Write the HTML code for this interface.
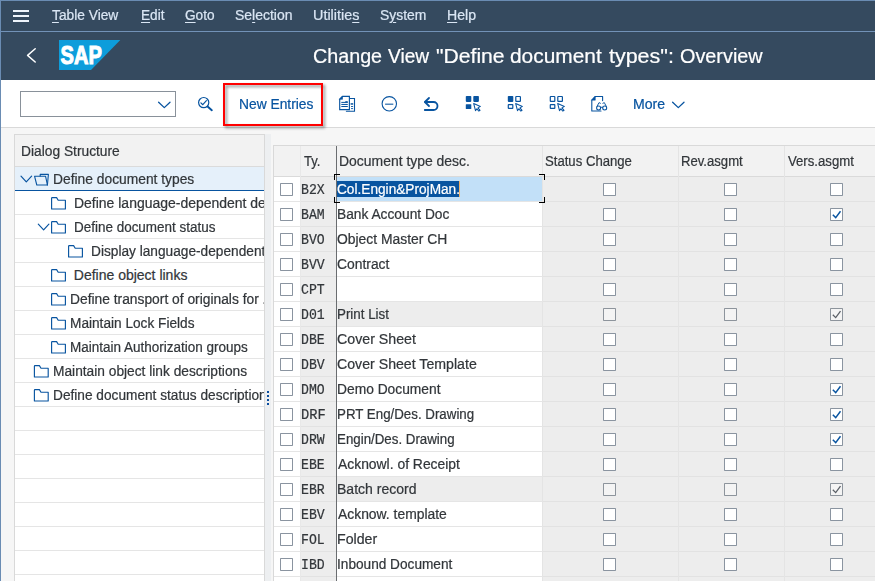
<!DOCTYPE html>
<html><head><meta charset="utf-8"><title>Change View "Define document types": Overview</title>
<style>
html,body{margin:0;padding:0;}
html{width:875px;height:581px;overflow:hidden;}
body{width:875px;height:581px;overflow:hidden;position:relative;background:#f6f6f6;font-family:"Liberation Sans",sans-serif;}
div,span,svg{position:absolute;box-sizing:border-box;}

.t{font-family:"Liberation Sans",sans-serif;font-size:14px;line-height:16px;color:#32363a;}
.m{font-family:"Liberation Mono",monospace;font-size:14px;line-height:16px;color:#32363a;}
.mn{color:#dae6f4;}
.bl{color:#0854a0;}
.ti{font-size:20px;line-height:24px;color:#fff;}
.wh{color:#fff;}

.t,.m{white-space:pre;transform-origin:0 0;-webkit-text-stroke:0.22px currentColor;}
u{text-decoration:underline;text-decoration-thickness:1px;text-underline-offset:1.5px;}
.cb{width:13px;height:13px;border:1px solid #8a94a0;border-radius:0.75px;background:#fff;}
.cb.d{background:#f4f4f4;border-color:#8d949c;}
.hl{background:#e5e5e5;height:1px;}
.vl{background:#e6e6e6;width:1px;}
</style></head><body>
<div style="left:0;top:0;width:875px;height:581px;overflow:hidden">
<div style="left:0;top:0;width:875px;height:80px;background:#354a5f"></div>
<div style="left:0;top:31px;width:875px;height:1px;background:#7292b7"></div>
<div style="left:0;top:0;width:875px;height:1px;background:#6a8cb3"></div>
<div style="left:13px;top:10px;width:16px;height:2px;background:#eef4fb"></div>
<div style="left:13px;top:15px;width:16px;height:2px;background:#eef4fb"></div>
<div style="left:13px;top:20px;width:16px;height:2px;background:#eef4fb"></div>
<div style="left:0;top:80px;width:875px;height:47px;background:#fff"></div>
<div style="left:0;top:127px;width:875px;height:1px;background:#d9d9d9"></div>
<div style="left:20px;top:91px;width:156px;height:26px;border:1px solid #89919a;background:#fff"></div>
<div style="left:14px;top:134px;width:251px;height:460px;border:1px solid #d9d9d9;background:#fff"></div>
<div style="left:15px;top:135px;width:249px;height:31px;background:#f2f2f2"></div>
<div class="hl" style="left:15px;top:166px;width:249px;background:#dbdbdb"></div>
<div style="left:15px;top:167px;width:249px;height:23px;background:#e5f0fa"></div>
<div class="hl" style="left:15px;top:190px;width:249px;background:#0854a0"></div>
<div class="hl" style="left:15px;top:214px;width:249px;background:#e5e5e5"></div>
<div class="hl" style="left:15px;top:238px;width:249px;background:#e5e5e5"></div>
<div class="hl" style="left:15px;top:262px;width:249px;background:#e5e5e5"></div>
<div class="hl" style="left:15px;top:286px;width:249px;background:#e5e5e5"></div>
<div class="hl" style="left:15px;top:310px;width:249px;background:#e5e5e5"></div>
<div class="hl" style="left:15px;top:334px;width:249px;background:#e5e5e5"></div>
<div class="hl" style="left:15px;top:358px;width:249px;background:#e5e5e5"></div>
<div class="hl" style="left:15px;top:382px;width:249px;background:#e5e5e5"></div>
<div class="hl" style="left:15px;top:406px;width:249px;background:#e5e5e5"></div>
<div class="hl" style="left:15px;top:430px;width:249px;background:#e5e5e5"></div>
<div class="hl" style="left:15px;top:454px;width:249px;background:#e5e5e5"></div>
<div class="hl" style="left:15px;top:478px;width:249px;background:#e5e5e5"></div>
<div class="hl" style="left:15px;top:502px;width:249px;background:#e5e5e5"></div>
<div class="hl" style="left:15px;top:526px;width:249px;background:#e5e5e5"></div>
<div class="hl" style="left:15px;top:550px;width:249px;background:#e5e5e5"></div>
<div class="hl" style="left:15px;top:574px;width:249px;background:#e5e5e5"></div>
<div style="left:265px;top:134px;width:6px;height:460px;background:#edeff1"></div>
<div style="left:267px;top:391px;width:2px;height:2px;background:#0a4d9e"></div>
<div style="left:267px;top:395px;width:2px;height:2px;background:#0a4d9e"></div>
<div style="left:267px;top:399px;width:2px;height:2px;background:#0a4d9e"></div>
<div style="left:267px;top:403px;width:2px;height:2px;background:#0a4d9e"></div>
<div style="left:273px;top:145px;width:620px;height:460px;border:1px solid #d9d9d9;background:#fff"></div>
<div style="left:274px;top:146px;width:601px;height:30px;background:#f2f2f2"></div>
<div style="left:300px;top:177px;width:36px;height:420px;background:#ededed"></div>
<div style="left:543px;top:177px;width:340px;height:420px;background:#ededed"></div>
<div style="left:337px;top:302px;width:206px;height:24px;background:#ededed"></div>
<div style="left:337px;top:477px;width:206px;height:24px;background:#ededed"></div>
<div style="left:337px;top:177px;width:205px;height:24px;background:#c2e0f8"></div>
<div style="left:337px;top:181px;width:122px;height:16px;background:#0854a0"></div>
<div style="left:459px;top:181px;width:1px;height:16px;background:#efb26c"></div>
<div class="hl" style="left:274px;top:176px;width:601px;background:#dadada"></div>
<div class="hl" style="left:274px;top:201px;width:26px;background:#e5e5e5"></div>
<div class="hl" style="left:300px;top:201px;width:36px;background:#e2e2e2"></div>
<div class="hl" style="left:337px;top:201px;width:205px;background:#e5e5e5"></div>
<div class="hl" style="left:542px;top:201px;width:333px;background:#e2e2e2"></div>
<div class="hl" style="left:274px;top:226px;width:26px;background:#e5e5e5"></div>
<div class="hl" style="left:300px;top:226px;width:36px;background:#e2e2e2"></div>
<div class="hl" style="left:337px;top:226px;width:205px;background:#e5e5e5"></div>
<div class="hl" style="left:542px;top:226px;width:333px;background:#e2e2e2"></div>
<div class="hl" style="left:274px;top:251px;width:26px;background:#e5e5e5"></div>
<div class="hl" style="left:300px;top:251px;width:36px;background:#e2e2e2"></div>
<div class="hl" style="left:337px;top:251px;width:205px;background:#e5e5e5"></div>
<div class="hl" style="left:542px;top:251px;width:333px;background:#e2e2e2"></div>
<div class="hl" style="left:274px;top:276px;width:26px;background:#e5e5e5"></div>
<div class="hl" style="left:300px;top:276px;width:36px;background:#e2e2e2"></div>
<div class="hl" style="left:337px;top:276px;width:205px;background:#e5e5e5"></div>
<div class="hl" style="left:542px;top:276px;width:333px;background:#e2e2e2"></div>
<div class="hl" style="left:274px;top:301px;width:26px;background:#e5e5e5"></div>
<div class="hl" style="left:300px;top:301px;width:36px;background:#e2e2e2"></div>
<div class="hl" style="left:337px;top:301px;width:205px;background:#e5e5e5"></div>
<div class="hl" style="left:542px;top:301px;width:333px;background:#e2e2e2"></div>
<div class="hl" style="left:274px;top:326px;width:26px;background:#e5e5e5"></div>
<div class="hl" style="left:300px;top:326px;width:36px;background:#e2e2e2"></div>
<div class="hl" style="left:337px;top:326px;width:205px;background:#e5e5e5"></div>
<div class="hl" style="left:542px;top:326px;width:333px;background:#e2e2e2"></div>
<div class="hl" style="left:274px;top:351px;width:26px;background:#e5e5e5"></div>
<div class="hl" style="left:300px;top:351px;width:36px;background:#e2e2e2"></div>
<div class="hl" style="left:337px;top:351px;width:205px;background:#e5e5e5"></div>
<div class="hl" style="left:542px;top:351px;width:333px;background:#e2e2e2"></div>
<div class="hl" style="left:274px;top:376px;width:26px;background:#e5e5e5"></div>
<div class="hl" style="left:300px;top:376px;width:36px;background:#e2e2e2"></div>
<div class="hl" style="left:337px;top:376px;width:205px;background:#e5e5e5"></div>
<div class="hl" style="left:542px;top:376px;width:333px;background:#e2e2e2"></div>
<div class="hl" style="left:274px;top:401px;width:26px;background:#e5e5e5"></div>
<div class="hl" style="left:300px;top:401px;width:36px;background:#e2e2e2"></div>
<div class="hl" style="left:337px;top:401px;width:205px;background:#e5e5e5"></div>
<div class="hl" style="left:542px;top:401px;width:333px;background:#e2e2e2"></div>
<div class="hl" style="left:274px;top:426px;width:26px;background:#e5e5e5"></div>
<div class="hl" style="left:300px;top:426px;width:36px;background:#e2e2e2"></div>
<div class="hl" style="left:337px;top:426px;width:205px;background:#e5e5e5"></div>
<div class="hl" style="left:542px;top:426px;width:333px;background:#e2e2e2"></div>
<div class="hl" style="left:274px;top:451px;width:26px;background:#e5e5e5"></div>
<div class="hl" style="left:300px;top:451px;width:36px;background:#e2e2e2"></div>
<div class="hl" style="left:337px;top:451px;width:205px;background:#e5e5e5"></div>
<div class="hl" style="left:542px;top:451px;width:333px;background:#e2e2e2"></div>
<div class="hl" style="left:274px;top:476px;width:26px;background:#e5e5e5"></div>
<div class="hl" style="left:300px;top:476px;width:36px;background:#e2e2e2"></div>
<div class="hl" style="left:337px;top:476px;width:205px;background:#e5e5e5"></div>
<div class="hl" style="left:542px;top:476px;width:333px;background:#e2e2e2"></div>
<div class="hl" style="left:274px;top:501px;width:26px;background:#e5e5e5"></div>
<div class="hl" style="left:300px;top:501px;width:36px;background:#e2e2e2"></div>
<div class="hl" style="left:337px;top:501px;width:205px;background:#e5e5e5"></div>
<div class="hl" style="left:542px;top:501px;width:333px;background:#e2e2e2"></div>
<div class="hl" style="left:274px;top:526px;width:26px;background:#e5e5e5"></div>
<div class="hl" style="left:300px;top:526px;width:36px;background:#e2e2e2"></div>
<div class="hl" style="left:337px;top:526px;width:205px;background:#e5e5e5"></div>
<div class="hl" style="left:542px;top:526px;width:333px;background:#e2e2e2"></div>
<div class="hl" style="left:274px;top:551px;width:26px;background:#e5e5e5"></div>
<div class="hl" style="left:300px;top:551px;width:36px;background:#e2e2e2"></div>
<div class="hl" style="left:337px;top:551px;width:205px;background:#e5e5e5"></div>
<div class="hl" style="left:542px;top:551px;width:333px;background:#e2e2e2"></div>
<div class="hl" style="left:274px;top:576px;width:26px;background:#e5e5e5"></div>
<div class="hl" style="left:300px;top:576px;width:36px;background:#e2e2e2"></div>
<div class="hl" style="left:337px;top:576px;width:205px;background:#e5e5e5"></div>
<div class="hl" style="left:542px;top:576px;width:333px;background:#e2e2e2"></div>
<div class="vl" style="left:300px;top:146px;height:440px;background:#e8e8e8"></div>
<div class="vl" style="left:336px;top:146px;height:440px;background:#6a6d70"></div>
<div class="vl" style="left:542px;top:146px;height:440px;background:#e4e4e4"></div>
<div class="vl" style="left:678px;top:146px;height:440px;background:#e4e4e4"></div>
<div class="vl" style="left:784px;top:146px;height:440px;background:#e4e4e4"></div>
<div style="left:334px;top:174px;width:6px;height:1px;background:#000"></div>
<div style="left:334px;top:174px;width:1px;height:6px;background:#000"></div>
<div style="left:334px;top:202px;width:6px;height:1px;background:#000"></div>
<div style="left:334px;top:197px;width:1px;height:6px;background:#000"></div>
<div style="left:539px;top:174px;width:6px;height:1px;background:#000"></div>
<div style="left:544px;top:174px;width:1px;height:6px;background:#000"></div>
<div style="left:539px;top:202px;width:6px;height:1px;background:#000"></div>
<div style="left:544px;top:197px;width:1px;height:6px;background:#000"></div>
<div class="cb" style="left:280px;top:183px"></div>
<div class="cb" style="left:603px;top:183px"></div>
<div class="cb" style="left:724px;top:183px"></div>
<div class="cb" style="left:830px;top:183px"></div>
<div class="cb" style="left:280px;top:208px"></div>
<div class="cb" style="left:603px;top:208px"></div>
<div class="cb" style="left:724px;top:208px"></div>
<div class="cb" style="left:830px;top:208px"></div>
<div class="cb" style="left:280px;top:233px"></div>
<div class="cb" style="left:603px;top:233px"></div>
<div class="cb" style="left:724px;top:233px"></div>
<div class="cb" style="left:830px;top:233px"></div>
<div class="cb" style="left:280px;top:258px"></div>
<div class="cb" style="left:603px;top:258px"></div>
<div class="cb" style="left:724px;top:258px"></div>
<div class="cb" style="left:830px;top:258px"></div>
<div class="cb" style="left:280px;top:283px"></div>
<div class="cb" style="left:603px;top:283px"></div>
<div class="cb" style="left:724px;top:283px"></div>
<div class="cb" style="left:830px;top:283px"></div>
<div class="cb" style="left:280px;top:308px"></div>
<div class="cb d" style="left:603px;top:308px"></div>
<div class="cb d" style="left:724px;top:308px"></div>
<div class="cb d" style="left:830px;top:308px"></div>
<div class="cb" style="left:280px;top:333px"></div>
<div class="cb" style="left:603px;top:333px"></div>
<div class="cb" style="left:724px;top:333px"></div>
<div class="cb" style="left:830px;top:333px"></div>
<div class="cb" style="left:280px;top:358px"></div>
<div class="cb" style="left:603px;top:358px"></div>
<div class="cb" style="left:724px;top:358px"></div>
<div class="cb" style="left:830px;top:358px"></div>
<div class="cb" style="left:280px;top:383px"></div>
<div class="cb" style="left:603px;top:383px"></div>
<div class="cb" style="left:724px;top:383px"></div>
<div class="cb" style="left:830px;top:383px"></div>
<div class="cb" style="left:280px;top:408px"></div>
<div class="cb" style="left:603px;top:408px"></div>
<div class="cb" style="left:724px;top:408px"></div>
<div class="cb" style="left:830px;top:408px"></div>
<div class="cb" style="left:280px;top:433px"></div>
<div class="cb" style="left:603px;top:433px"></div>
<div class="cb" style="left:724px;top:433px"></div>
<div class="cb" style="left:830px;top:433px"></div>
<div class="cb" style="left:280px;top:458px"></div>
<div class="cb" style="left:603px;top:458px"></div>
<div class="cb" style="left:724px;top:458px"></div>
<div class="cb" style="left:830px;top:458px"></div>
<div class="cb" style="left:280px;top:483px"></div>
<div class="cb d" style="left:603px;top:483px"></div>
<div class="cb d" style="left:724px;top:483px"></div>
<div class="cb d" style="left:830px;top:483px"></div>
<div class="cb" style="left:280px;top:508px"></div>
<div class="cb" style="left:603px;top:508px"></div>
<div class="cb" style="left:724px;top:508px"></div>
<div class="cb" style="left:830px;top:508px"></div>
<div class="cb" style="left:280px;top:533px"></div>
<div class="cb" style="left:603px;top:533px"></div>
<div class="cb" style="left:724px;top:533px"></div>
<div class="cb" style="left:830px;top:533px"></div>
<div class="cb" style="left:280px;top:558px"></div>
<div class="cb" style="left:603px;top:558px"></div>
<div class="cb" style="left:724px;top:558px"></div>
<div class="cb" style="left:830px;top:558px"></div>
<div style="left:223px;top:83px;width:100px;height:43px;border:2px solid #f00;filter:drop-shadow(2px 2px 1.5px rgba(0,0,0,.45))"></div>
<span class="t mn" style="left:52.1px;top:6.95px;transform:scaleX(0.9824);"><u>T</u>able View</span>
<span class="t mn" style="left:140.6px;top:6.95px;transform:scaleX(0.9709);"><u>E</u>dit</span>
<span class="t mn" style="left:184.6px;top:6.95px;transform:scaleX(0.9736);"><u>G</u>oto</span>
<span class="t mn" style="left:235.0px;top:6.95px;transform:scaleX(0.9983);">Se<u>l</u>ection</span>
<span class="t mn" style="left:313.4px;top:6.95px;transform:scaleX(1.0274);">Utilitie<u>s</u></span>
<span class="t mn" style="left:379.6px;top:6.95px;transform:scaleX(0.9912);">S<u>y</u>stem</span>
<span class="t mn" style="left:447.2px;top:6.95px;transform:scaleX(1.0075);"><u>H</u>elp</span>
<span class="t ti" style="left:312.7px;top:43.97px;transform:scaleX(0.9857);">Change</span>
<span class="t ti" style="left:388.3px;top:43.97px;transform:scaleX(0.9560);">View</span>
<span class="t ti" style="left:436.1px;top:43.97px;transform:scaleX(1.0573);">"Define</span>
<span class="t ti" style="left:509.6px;top:43.97px;transform:scaleX(1.0449);">document</span>
<span class="t ti" style="left:608.5px;top:43.97px;transform:scaleX(1.0729);">types":</span>
<span class="t ti" style="left:679.6px;top:43.97px;transform:scaleX(0.9916);">Overview</span>
<span class="t bl" style="left:238.7px;top:95.75px;transform:scaleX(0.9865);">New Entries</span>
<span class="t bl" style="left:632.8px;top:95.75px;transform:scaleX(1.0070);">More</span>
<span class="t" style="left:303.9px;top:153.05px;transform:scaleX(0.9305);">Ty.</span>
<span class="t" style="left:339.2px;top:153.05px;transform:scaleX(0.9954);">Document type desc.</span>
<span class="t" style="left:544.5px;top:153.05px;transform:scaleX(0.9385);">Status Change</span>
<span class="t" style="left:680.5px;top:153.05px;transform:scaleX(0.9370);">Rev.asgmt</span>
<span class="t" style="left:787.5px;top:153.05px;transform:scaleX(0.9401);">Vers.asgmt</span>
<span class="m" style="left:300.8px;top:181.66px;transform:scaleX(0.9380);">B2X</span>
<span class="t wh" style="left:336.8px;top:180.55px;transform:scaleX(0.9758);">Col.Engin&amp;ProjMan.</span>
<span class="m" style="left:300.8px;top:206.66px;transform:scaleX(0.9380);">BAM</span>
<span class="t" style="left:336.8px;top:205.55px;transform:scaleX(0.9823);">Bank Account Doc</span>
<span class="m" style="left:300.8px;top:231.66px;transform:scaleX(0.9380);">BVO</span>
<span class="t" style="left:336.8px;top:230.55px;transform:scaleX(0.9910);">Object Master CH</span>
<span class="m" style="left:300.8px;top:256.66px;transform:scaleX(0.9380);">BVV</span>
<span class="t" style="left:336.8px;top:255.55px;transform:scaleX(0.9905);">Contract</span>
<span class="m" style="left:300.8px;top:281.66px;transform:scaleX(0.9380);">CPT</span>
<span class="m" style="left:300.8px;top:306.66px;transform:scaleX(0.9380);">D01</span>
<span class="t" style="left:336.8px;top:305.55px;transform:scaleX(0.9538);">Print List</span>
<span class="m" style="left:300.8px;top:331.66px;transform:scaleX(0.9380);">DBE</span>
<span class="t" style="left:336.8px;top:330.55px;transform:scaleX(1.0143);">Cover Sheet</span>
<span class="m" style="left:300.8px;top:356.66px;transform:scaleX(0.9380);">DBV</span>
<span class="t" style="left:336.8px;top:355.55px;transform:scaleX(1.0110);">Cover Sheet Template</span>
<span class="m" style="left:300.8px;top:381.66px;transform:scaleX(0.9380);">DMO</span>
<span class="t" style="left:336.8px;top:380.55px;transform:scaleX(0.9856);">Demo Document</span>
<span class="m" style="left:300.8px;top:406.66px;transform:scaleX(0.9787);">DRF</span>
<span class="t" style="left:336.8px;top:405.55px;transform:scaleX(0.9510);">PRT Eng/Des. Drawing</span>
<span class="m" style="left:300.8px;top:431.66px;transform:scaleX(0.9380);">DRW</span>
<span class="t" style="left:336.8px;top:430.55px;transform:scaleX(0.9508);">Engin/Des. Drawing</span>
<span class="m" style="left:300.8px;top:456.66px;transform:scaleX(0.9380);">EBE</span>
<span class="t" style="left:337.8px;top:455.55px;transform:scaleX(0.9919);">Acknowl. of Receipt</span>
<span class="m" style="left:300.8px;top:481.66px;transform:scaleX(0.9380);">EBR</span>
<span class="t" style="left:336.8px;top:480.55px;transform:scaleX(1.0013);">Batch record</span>
<span class="m" style="left:300.8px;top:506.66px;transform:scaleX(0.9380);">EBV</span>
<span class="t" style="left:337.8px;top:505.55px;transform:scaleX(0.9918);">Acknow. template</span>
<span class="m" style="left:300.8px;top:531.66px;transform:scaleX(0.9380);">FOL</span>
<span class="t" style="left:336.8px;top:530.55px;transform:scaleX(1.0130);">Folder</span>
<span class="m" style="left:300.8px;top:556.66px;transform:scaleX(0.9380);">IBD</span>
<span class="t" style="left:336.8px;top:555.55px;transform:scaleX(0.9747);">Inbound Document</span>
<span class="t" style="left:21.0px;top:142.95px;transform:scaleX(0.9839);">Dialog Structure</span>
<div style="left:15px;top:135px;width:249px;height:446px;overflow:hidden">
<span class="t" style="left:37.8px;top:35.95px;transform:scaleX(0.9866);">Define document types</span>
<span class="t" style="left:58.8px;top:59.95px;transform:scaleX(0.9980);">Define language-dependent descr</span>
<span class="t" style="left:58.8px;top:83.95px;transform:scaleX(0.9616);">Define document status</span>
<span class="t" style="left:75.7px;top:107.95px;transform:scaleX(0.9780);">Display language-dependent status</span>
<span class="t" style="left:58.8px;top:131.95px;transform:scaleX(1.0000);">Define object links</span>
<span class="t" style="left:54.9px;top:155.95px;transform:scaleX(0.9860);">Define transport of originals for ...</span>
<span class="t" style="left:54.9px;top:179.95px;transform:scaleX(0.9754);">Maintain Lock Fields</span>
<span class="t" style="left:54.9px;top:203.95px;transform:scaleX(0.9639);">Maintain Authorization groups</span>
<span class="t" style="left:38.0px;top:227.95px;transform:scaleX(0.9817);">Maintain object link descriptions</span>
<span class="t" style="left:38.0px;top:251.95px;transform:scaleX(0.9770);">Define document status descriptions</span>
</div>
<svg width="875" height="581" viewBox="0 0 875 581" style="left:0;top:0" fill="none" stroke-linecap="round" stroke-linejoin="round">
<!-- back chevron -->
<path d="M35.2 48.8 L27.6 55.4 L35.2 62" stroke="#fff" stroke-width="1.5"/>
<!-- SAP logo -->
<polygon points="59,40 120.3,40 91,70 59,70" fill="#0d9ddb" stroke="none"/>
<text x="60.6" y="63.6" font-family="Liberation Sans, sans-serif" font-weight="700" font-size="25.4" fill="#fff" stroke="#fff" stroke-width="1.1" stroke-linejoin="miter" textLength="41.2" lengthAdjust="spacingAndGlyphs">SAP</text>
<g stroke="#0854a0">
<!-- input chevron -->
<path d="M158.6 102.2 L164.3 107.6 L170 102.2" stroke-width="1.3"/>
<!-- search check -->
<circle cx="203.7" cy="102.6" r="5.1" stroke-width="1.2"/>
<path d="M207.6 106.6 L211.8 110.2" stroke-width="2"/>
<path d="M200.9 102.9 L202.8 104.7 L206.4 100.7" stroke-width="1.2"/>
<!-- copy -->
<path d="M342.5 96.4 H349.4 V109.6 H339.7 V99.3 Z" stroke-width="1.15" stroke-linejoin="miter"/>
<path d="M342.5 96.4 V99.3 H339.7 Z" fill="#0854a0" stroke-width="0.6"/>
<path d="M341.3 102.4 H347.8 M341.3 104.45 H347.8 M341.3 106.5 H347.8" stroke-width="1" stroke-linecap="butt"/>
<rect x="345.3" y="101.2" width="2.4" height="1.3" fill="#0854a0" stroke="none"/>
<path d="M350.2 98.5 H354.5 V111.2 H346.4" stroke-width="1.1" stroke-linejoin="miter"/>
<rect x="350.6" y="103.2" width="2.6" height="1.5" fill="#0854a0" stroke="none"/>
<path d="M351 106.5 H353.1 M351 108.6 H353.1" stroke-width="0.9" stroke-linecap="butt"/>
<!-- minus circle -->
<circle cx="389.3" cy="103.8" r="7.2" stroke-width="1.1"/>
<rect x="385.1" y="103.65" width="8.2" height="1.05" fill="#0854a0" stroke="none"/>
<!-- undo -->
<path d="M429 98 L424.9 102 L429 106" stroke-width="1.8"/>
<path d="M425.2 102 H433.5 A4 4 0 0 1 433.5 110 H424.8" stroke-width="1.8"/>
<!-- select all -->
<g fill="#0854a0" stroke="none">
<rect x="465.8" y="96" width="5.5" height="5.9" rx="0.8"/>
<rect x="473.3" y="96" width="5.6" height="5.9" rx="0.8"/>
<rect x="465.8" y="104.2" width="5.5" height="4.7" rx="0.5"/>
<rect x="507.8" y="96" width="5.5" height="5.9" rx="0.8"/>
</g>
<path d="M473.7 103.6 L480.4 106.4 L478 107.9 L480 110.4 L478.6 111 L476.9 108.7 L475.5 110.6 Z" stroke-width="1.05" fill="#fff"/>
<!-- select block -->
<rect x="515.8" y="96.5" width="4.6" height="4.9" rx="0.5" stroke-width="1.2"/>
<rect x="508.3" y="104.7" width="4.5" height="3.7" rx="0.4" stroke-width="1.2"/>
<path transform="translate(42 0)" d="M473.7 103.6 L480.4 106.4 L478 107.9 L480 110.4 L478.6 111 L476.9 108.7 L475.5 110.6 Z" stroke-width="1.05" fill="#fff"/>
<!-- deselect all -->
<rect x="550.3" y="96.5" width="4.5" height="4.9" rx="0.5" stroke-width="1.2"/>
<rect x="557.8" y="96.5" width="4.6" height="4.9" rx="0.5" stroke-width="1.2"/>
<rect x="550.3" y="104.7" width="4.5" height="3.7" rx="0.4" stroke-width="1.2"/>
<path transform="translate(84 0)" d="M473.7 103.6 L480.4 106.4 L478 107.9 L480 110.4 L478.6 111 L476.9 108.7 L475.5 110.6 Z" stroke-width="1.05" fill="#fff"/>
<!-- doc with glasses -->
<path d="M595.3 96.5 H602.6 V100.6 M595.3 96.5 L591.8 100.2 V111 H601" stroke-width="1.1"/>
<path d="M595.3 96.5 V100.2 H591.8 Z" fill="#0854a0" stroke-width="0.5"/>
<circle cx="598.6" cy="107.9" r="2" stroke-width="1.05"/>
<circle cx="604.7" cy="107.9" r="2" stroke-width="1.05"/>
<path d="M600.6 107.3 H602.7 M597 106.4 L599 102.6 L600.4 103.3 M606.3 106.4 L604.3 102.6 L602.9 103.3" stroke-width="0.95"/>
<!-- more chevron -->
<path d="M672.6 102.2 L678.3 107.6 L684 102.2" stroke-width="1.3"/>
</g>

<path d="M21 176.2 L26.3 181.8 L31.6 176.2" stroke="#0854a0" stroke-width="1.2"/>
<path d="M40.199999999999996 176 V174.4 H48.4 L47.4 185" stroke="#0854a0" stroke-width="1.1"/>
<path d="M34.6 176.3 H45.599999999999994 L47.4 185 H36.8 Z" stroke="#0854a0" stroke-width="1.1"/>
<path d="M51.6 198.2 Q51.6 197.6 52.2 197.6 H56.6 L58.2 200.2 H65.4 V209 H51.6 Z" stroke="#0854a0" stroke-width="1.15"/>
<path d="M38.3 224.2 L43.599999999999994 229.8 L48.9 224.2" stroke="#0854a0" stroke-width="1.2"/>
<path d="M51.6 222.2 Q51.6 221.6 52.2 221.6 H56.6 L58.2 224.2 H65.4 V233 H51.6 Z" stroke="#0854a0" stroke-width="1.15"/>
<path d="M68.6 246.2 Q68.6 245.6 69.2 245.6 H73.6 L75.2 248.2 H82.4 V257 H68.6 Z" stroke="#0854a0" stroke-width="1.15"/>
<path d="M51.6 270.2 Q51.6 269.6 52.2 269.6 H56.6 L58.2 272.2 H65.4 V281 H51.6 Z" stroke="#0854a0" stroke-width="1.15"/>
<path d="M51.6 294.2 Q51.6 293.6 52.2 293.6 H56.6 L58.2 296.2 H65.4 V305 H51.6 Z" stroke="#0854a0" stroke-width="1.15"/>
<path d="M51.6 318.2 Q51.6 317.6 52.2 317.6 H56.6 L58.2 320.2 H65.4 V329 H51.6 Z" stroke="#0854a0" stroke-width="1.15"/>
<path d="M51.6 342.2 Q51.6 341.6 52.2 341.6 H56.6 L58.2 344.2 H65.4 V353 H51.6 Z" stroke="#0854a0" stroke-width="1.15"/>
<path d="M34.4 366.2 Q34.4 365.6 35.0 365.6 H39.4 L41.0 368.2 H48.199999999999996 V377 H34.4 Z" stroke="#0854a0" stroke-width="1.15"/>
<path d="M34.4 390.2 Q34.4 389.6 35.0 389.6 H39.4 L41.0 392.2 H48.199999999999996 V401 H34.4 Z" stroke="#0854a0" stroke-width="1.15"/>
<path d="M832.8 214.8 L835.7 217.6 L840.5 211.2" stroke="#0854a0" stroke-width="1.45" stroke-linecap="butt" stroke-linejoin="miter"/>
<path d="M832.8 314.8 L835.7 317.6 L840.5 311.2" stroke="#5b6067" stroke-width="1.3" stroke-linecap="butt" stroke-linejoin="miter"/>
<path d="M832.8 389.8 L835.7 392.6 L840.5 386.2" stroke="#0854a0" stroke-width="1.45" stroke-linecap="butt" stroke-linejoin="miter"/>
<path d="M832.8 414.8 L835.7 417.6 L840.5 411.2" stroke="#0854a0" stroke-width="1.45" stroke-linecap="butt" stroke-linejoin="miter"/>
<path d="M832.8 439.8 L835.7 442.6 L840.5 436.2" stroke="#0854a0" stroke-width="1.45" stroke-linecap="butt" stroke-linejoin="miter"/>
<path d="M832.8 489.8 L835.7 492.6 L840.5 486.2" stroke="#5b6067" stroke-width="1.3" stroke-linecap="butt" stroke-linejoin="miter"/>
</svg>
<div style="left:0;top:0;width:1px;height:581px;background:#6a8cb3"></div>
</div>
</body></html>
